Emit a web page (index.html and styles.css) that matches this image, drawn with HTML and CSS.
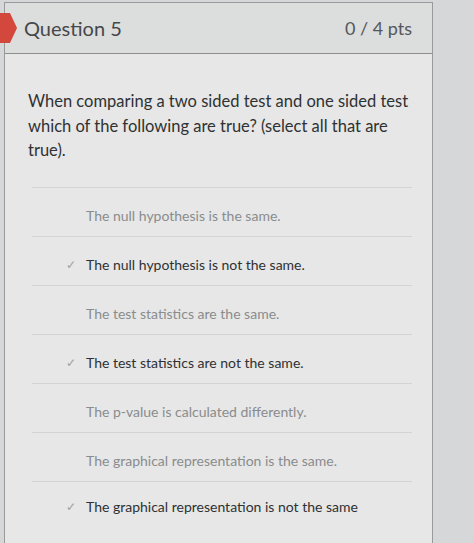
FILE: index.html
```html
<!DOCTYPE html>
<html lang="en">
<head>
    <meta charset="UTF-8">
    <meta name="viewport" content="width=device-width, initial-scale=1.0">
    <title>Question 5</title>
    <link rel="stylesheet" href="styles.css">
</head>
<body>

    <div class="question">
        <svg class="flag" width="18" height="30" viewBox="0 0 18 30">
            <polygon points="0,0 10,0 17,15 10,30 0,30" fill="#d4473d"/>
        </svg>

        <div class="question-header">
            <span class="question-name">Question 5</span>
            <span class="question-points">0 / 4 pts</span>
        </div>

        <div class="question-body">
            <p class="question-text">When comparing a two sided test and one sided test which of the following are true? (select all that are true).</p>

            <div class="answers">
                <div class="answer"><span class="check"></span><span class="answer-text">The null hypothesis is the same.</span></div>
                <div class="answer selected"><span class="check">✓</span><span class="answer-text">The null hypothesis is not the same.</span></div>
                <div class="answer"><span class="check"></span><span class="answer-text">The test statistics are the same.</span></div>
                <div class="answer selected"><span class="check">✓</span><span class="answer-text">The test statistics are not the same.</span></div>
                <div class="answer"><span class="check"></span><span class="answer-text">The p-value is calculated differently.</span></div>
                <div class="answer"><span class="check"></span><span class="answer-text">The graphical representation is the same.</span></div>
                <div class="answer selected last"><span class="check">✓</span><span class="answer-text">The graphical representation is not the same</span></div>
            </div>
        </div>
    </div>

</body>
</html>
```

FILE: styles.css
```css
* {
    margin: 0;
    padding: 0;
    box-sizing: border-box;
}

body {
    font-family: Lato, "Open Sans", Arial, sans-serif;
    background-color: #d6d7d8;
    padding-top: 2px;
    height: 543px;
    overflow: hidden;
}

.question {
    position: relative;
    margin-left: 4px;
    width: 429px;
    border: 1px solid #9a9a9a;
    background: #e6e7e6;
}

.flag {
    position: absolute;
    top: 10px;
    left: -5px;
}

.question-header {
    display: flex;
    justify-content: space-between;
    align-items: center;
    height: 51px;
    padding: 0 20px 0 19px;
    background: #dcdddd;
    border-bottom: 1px solid #8e8e8e;
    color: #45474a;
}

.question-name {
    font-size: 20px;
}

.question-points {
    font-size: 18px;
    color: #55575a;
}

.question-body {
    padding: 35px 20px 30px 23px;
}

.question-text {
    font-size: 16.5px;
    line-height: 24.5px;
    color: #2f3133;
}

.answers {
    margin: 24px 0 0 4px;
}

.answer {
    display: flex;
    align-items: center;
    height: 49px;
    padding: 8px 0 0 0;
    border-top: 1px solid #d3d4d3;
    font-size: 14px;
    color: #8a8c8e;
}

.answer.last {
    height: 42px;
}

.check {
    width: 54px;
    padding-left: 34px;
    font-size: 12px;
    color: #9fa2a4;
}

.answer.selected {
    color: #2f3133;
}
```
